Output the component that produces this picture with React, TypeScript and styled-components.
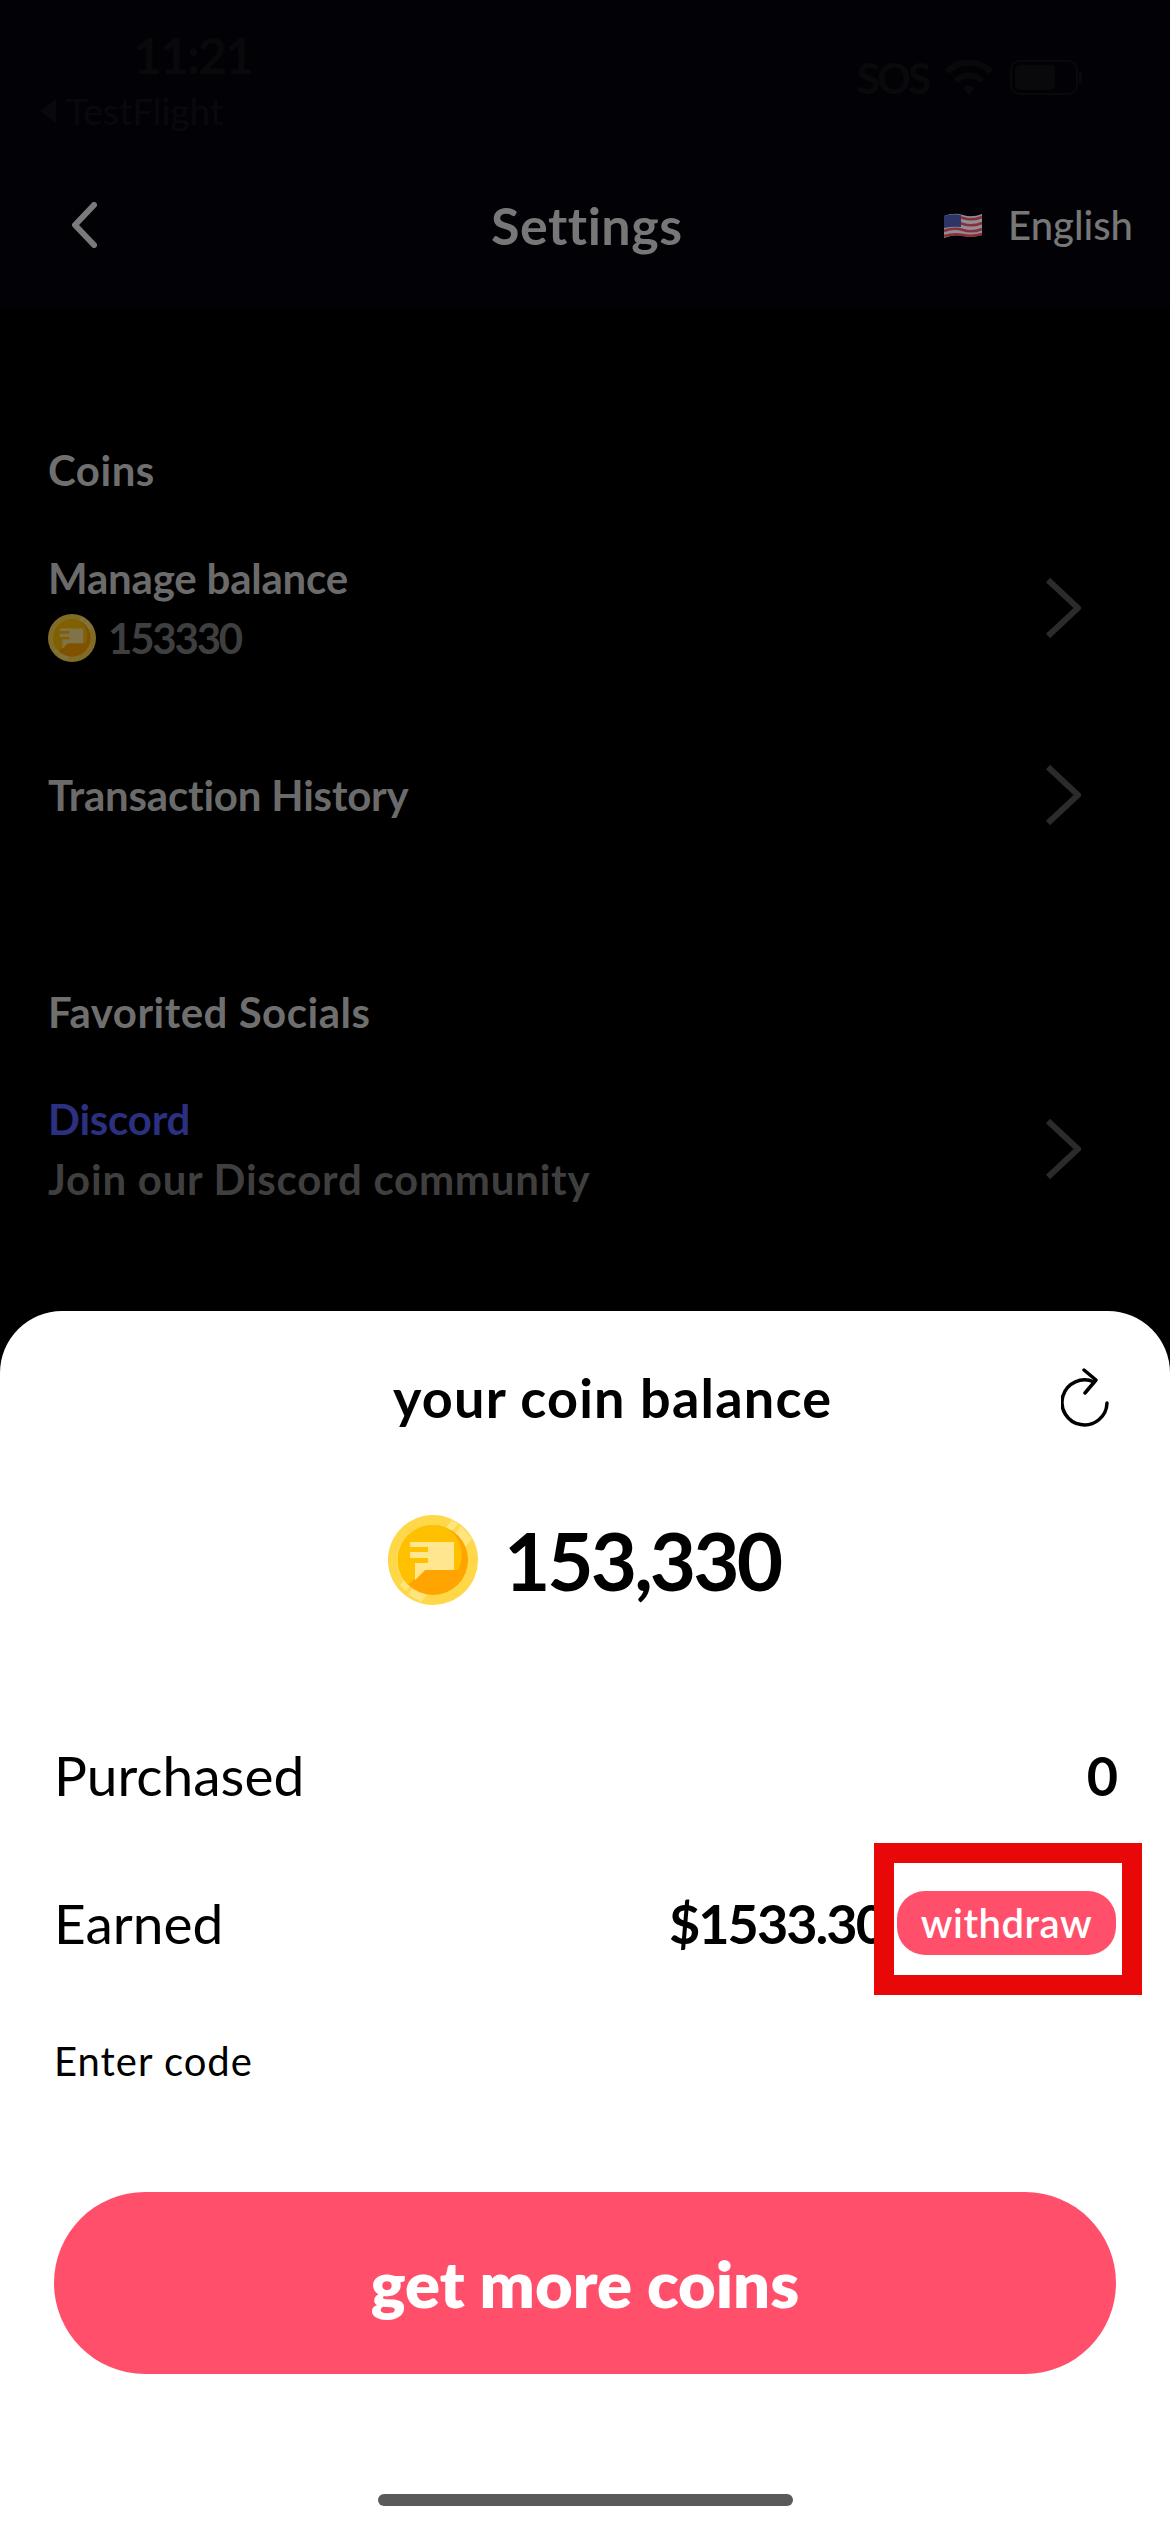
import { FC, ReactNode } from "react";
import styled, { createGlobalStyle } from "styled-components";

const GlobalStyle = createGlobalStyle`
  html, body {
    margin: 0;
    padding: 0;
    background: #000;
  }
  * {
    box-sizing: border-box;
  }
`;

const Screen = styled.div`
  width: 1170px;
  height: 2532px;
  display: flex;
  flex-direction: column;
  overflow: hidden;
  background: #000;
  font-family: Lato, "Liberation Sans", sans-serif;
`;

const Top = styled.header`
  height: 308px;
  background: #020206;
  padding: 35px 88px 0 38px;
  display: flex;
  flex-direction: column;
`;

const StatusRow = styled.div`
  display: flex;
  justify-content: space-between;
  color: #09090c;
`;

const StatusLeft = styled.div`
  display: flex;
  flex-direction: column;
  gap: 21px;
`;

const Time = styled.span`
  margin-left: 95px;
  font-size: 50px;
  line-height: 40px;
  font-weight: 700;
  letter-spacing: -2px;
`;

const BackLink = styled.span`
  font-size: 37px;
  line-height: 30px;
  display: flex;
  align-items: center;
  gap: 8px;
`;

const StatusRight = styled.div`
  display: flex;
  align-items: center;
  gap: 16px;
  height: 35px;
  margin-top: 25px;
`;

const Sos = styled.span`
  font-size: 42px;
  font-weight: 700;
  letter-spacing: -3px;
`;

const NavBar = styled.nav`
  display: grid;
  grid-template-columns: 420px auto 1fr;
  align-items: center;
  height: 50px;
  margin: 68px -51px 0 33px;
`;

const NavTitle = styled.h1`
  margin: 0;
  color: #777;
  font-size: 52px;
  letter-spacing: 0.5px;
  font-weight: 700;
`;

const Lang = styled.div`
  display: flex;
  justify-content: flex-end;
  align-items: center;
  gap: 26px;
  color: #777;
  font-size: 40px;
  font-weight: 500;
`;

const Settings = styled.section`
  padding: 137px 48px 0;
  display: flex;
  flex-direction: column;
`;

const SectionTitle = styled.h2<{ $top?: number }>`
  margin: ${(p) => p.$top ?? 0}px 0 0;
  color: #6f6f6f;
  font-size: 42px;
  letter-spacing: 0.5px;
  line-height: 50px;
  font-weight: 700;
`;

const SettingRow = styled.div<{ $top: number }>`
  margin-top: ${(p) => p.$top}px;
  display: flex;
  justify-content: space-between;
  align-items: center;
  padding-right: 41px;
`;

const SettingText = styled.div`
  display: flex;
  flex-direction: column;
  gap: 10px;
`;

const SettingLabel = styled.span<{ $color?: string }>`
  color: ${(p) => p.$color ?? "#6b6b6b"};
  font-size: 42px;
  letter-spacing: -0.2px;
  line-height: 50px;
  font-weight: 700;
`;

const SettingDetail = styled.span`
  display: flex;
  align-items: center;
  gap: 12px;
  color: #3f3f3f;
  font-size: 42px;
  letter-spacing: 0.75px;
  line-height: 50px;
  font-weight: 700;
`;

const CoinCount = styled.span`
  letter-spacing: -2.2px;
`;

const DimCoin = styled.span`
  display: flex;
  opacity: 0.5;
`;

const Sheet = styled.section`
  margin-top: auto;
  height: 1221px;
  background: #fff;
  border-radius: 62px 62px 0 0;
  padding: 57px 54px 0;
  display: flex;
  flex-direction: column;
`;

const SheetHead = styled.div`
  display: flex;
  justify-content: space-between;
  align-items: center;
  padding: 0 6px 0 339px;
  height: 59px;
`;

const SheetTitle = styled.h2`
  margin: 0;
  color: #000;
  font-size: 54px;
  letter-spacing: 1.2px;
  font-weight: 700;
`;

const Balance = styled.div`
  margin-top: 88px;
  display: flex;
  justify-content: center;
  align-items: center;
  gap: 26px;
  height: 90px;
  padding-right: 2px;
  color: #000;
  font-size: 80px;
  letter-spacing: -3px;
  font-weight: 700;
`;

const StatRow = styled.div<{ $top: number; $height: number }>`
  position: relative;
  margin-top: ${(p) => p.$top}px;
  height: ${(p) => p.$height}px;
  display: flex;
  justify-content: space-between;
  align-items: center;
`;

const StatLabel = styled.span`
  color: #000;
  font-size: 55px;
  font-weight: 400;
`;

const StatValue = styled.span`
  color: #000;
  font-size: 54px;
  letter-spacing: -2px;
  font-weight: 700;
`;

const EarnedGroup = styled.div`
  display: flex;
  align-items: center;
  gap: 12px;
`;

const Pill = styled.button`
  width: 219px;
  height: 64px;
  border: 0;
  border-radius: 28px;
  padding: 0;
  background: #ff4f6b;
  color: #fff;
  font-family: inherit;
  font-size: 40px;
  letter-spacing: 0.5px;
  font-weight: 600;
`;

const Annotation = styled.div`
  position: absolute;
  top: -48px;
  right: -26px;
  width: 268px;
  height: 152px;
  border: 20px solid #e90808;
  pointer-events: none;
`;

const CodeLink = styled.div`
  margin-top: 81px;
  color: #000;
  font-size: 40px;
  letter-spacing: 1px;
  line-height: 50px;
`;

const GetCoins = styled.button`
  margin-top: 106px;
  height: 182px;
  border: 0;
  border-radius: 91px;
  background: #ff4f6b;
  color: #fff;
  font-family: inherit;
  font-size: 65px;
  font-weight: 800;
`;

const HomeBar = styled.div`
  margin: 120px auto 0;
  width: 415px;
  height: 12px;
  border-radius: 6px;
  background: #5a5a5a;
`;

const Coin: FC<{ size: number }> = ({ size }) => (
  <svg width={size} height={size} viewBox="0 0 90 90">
    <circle cx="45" cy="45" r="45" fill="#ffd84a" />
    <path d="M3 30 A45 45 0 0 0 17 80 A46 46 0 0 1 3 30Z" fill="#f2c200" />
    <path d="M64 5 L70 9 L18 76 L12 70Z" fill="#ffe57e" />
    <path d="M73 11 L84 24 L33 87 L20 79Z" fill="#ffe57e" />
    <circle cx="45" cy="45" r="35" fill="#ffa400" />
    <path d="M20 69.5 L37 55 H70 A32 32 0 0 0 58 12.5 A35 35 0 0 0 20 69.5Z" fill="#ffc000" />
    <path
      d="M22 27 H66 V55 H37 L27 65 V48 H40 V43 H22 V37 H40 V32 H22Z"
      fill="#ffe68f"
    />
  </svg>
);

const Chevron: FC = () => (
  <svg width="36" height="60" viewBox="0 0 36 60" fill="none">
    <path d="M3 2 L33 30 L3 58" stroke="#2b2b2e" strokeWidth="6" />
  </svg>
);

const Row: FC<{ top: number; label: string; color?: string; detail?: ReactNode }> = ({
  top,
  label,
  color,
  detail,
}) => (
  <SettingRow $top={top}>
    <SettingText>
      <SettingLabel $color={color}>{label}</SettingLabel>
      {detail && <SettingDetail>{detail}</SettingDetail>}
    </SettingText>
    <Chevron />
  </SettingRow>
);

export default function App() {
  return (
    <Screen>
      <GlobalStyle />
      <Top>
        <StatusRow>
          <StatusLeft>
            <Time>11:21</Time>
            <BackLink>
              <svg width="20" height="26" viewBox="0 0 20 26">
                <path d="M18 1 L2 13 L18 25Z" fill="currentColor" />
              </svg>
              TestFlight
            </BackLink>
          </StatusLeft>
          <StatusRight>
            <Sos>SOS</Sos>
            <svg width="50" height="35" viewBox="0 0 50 35" fill="none">
              <path d="M3 12 A30 30 0 0 1 47 12" stroke="currentColor" strokeWidth="6" />
              <path d="M12 21 A18 18 0 0 1 38 21" stroke="currentColor" strokeWidth="6" />
              <path d="M19 28 L25 35 L31 28 A8 8 0 0 0 19 28Z" fill="currentColor" />
            </svg>
            <svg width="72" height="35" viewBox="0 0 72 35" fill="none">
              <rect x="1" y="1" width="66" height="33" rx="9" stroke="currentColor" strokeWidth="2" />
              <rect x="5" y="5" width="40" height="25" rx="5" fill="currentColor" />
              <rect x="69" y="12" width="3" height="11" rx="1.5" fill="currentColor" />
            </svg>
          </StatusRight>
        </StatusRow>
        <NavBar>
          <svg width="26" height="46" viewBox="0 0 26 46" fill="none">
            <path
              d="M23 3 L4 23 L23 43"
              stroke="#7a7a7a"
              strokeWidth="6"
              strokeLinecap="round"
              strokeLinejoin="round"
            />
          </svg>
          <NavTitle>Settings</NavTitle>
          <Lang>
            <svg width="38" height="25" viewBox="0 0 38 25">
              <path d="M0 3 Q10 -1 19 2 T38 1 V22 Q28 25 19 23 T0 25Z" fill="#8f8f95" />
              <path
                d="M0 6 Q10 2 19 5 T38 4 M0 12 Q10 8 19 11 T38 10 M0 18 Q10 14 19 17 T38 16 M0 23 Q10 20 19 22 T38 21"
                stroke="#8b2f3a"
                strokeWidth="2.6"
                fill="none"
              />
              <path d="M0 3 Q9 0 17 2 V14 Q9 13 0 15Z" fill="#2c3566" />
            </svg>
            English
          </Lang>
        </NavBar>
      </Top>
      <Settings>
        <SectionTitle>Coins</SectionTitle>
        <Row
          top={58}
          label="Manage balance"
          detail={
            <>
              <DimCoin>
                <Coin size={48} />
              </DimCoin>
              <CoinCount>153330</CoinCount>
            </>
          }
        />
        <Row top={102} label="Transaction History" />
        <SectionTitle $top={162}>Favorited Socials</SectionTitle>
        <Row
          top={57}
          label="Discord"
          color="#2b3080"
          detail={"Join our Discord community"}
        />
      </Settings>
      <Sheet>
        <SheetHead>
          <SheetTitle>your coin balance</SheetTitle>
          <svg width="49" height="59" viewBox="0 0 49 59" fill="none">
            <path
              d="M46 35 A22.5 22.5 0 1 1 33 14"
              stroke="#000"
              strokeWidth="3.5"
              strokeLinecap="round"
            />
            <path
              d="M23 2 L35 12 L24 25"
              stroke="#000"
              strokeWidth="3.5"
              strokeLinecap="round"
              strokeLinejoin="round"
            />
          </svg>
        </SheetHead>
        <Balance>
          <Coin size={90} />
          153,330
        </Balance>
        <StatRow $top={140} $height={60}>
          <StatLabel>Purchased</StatLabel>
          <StatValue>0</StatValue>
        </StatRow>
        <StatRow $top={86} $height={64}>
          <StatLabel>Earned</StatLabel>
          <EarnedGroup>
            <StatValue>$1533.30</StatValue>
            <Pill>withdraw</Pill>
          </EarnedGroup>
          <Annotation />
        </StatRow>
        <CodeLink>Enter code</CodeLink>
        <GetCoins>get more coins</GetCoins>
        <HomeBar />
      </Sheet>
    </Screen>
  );
}
